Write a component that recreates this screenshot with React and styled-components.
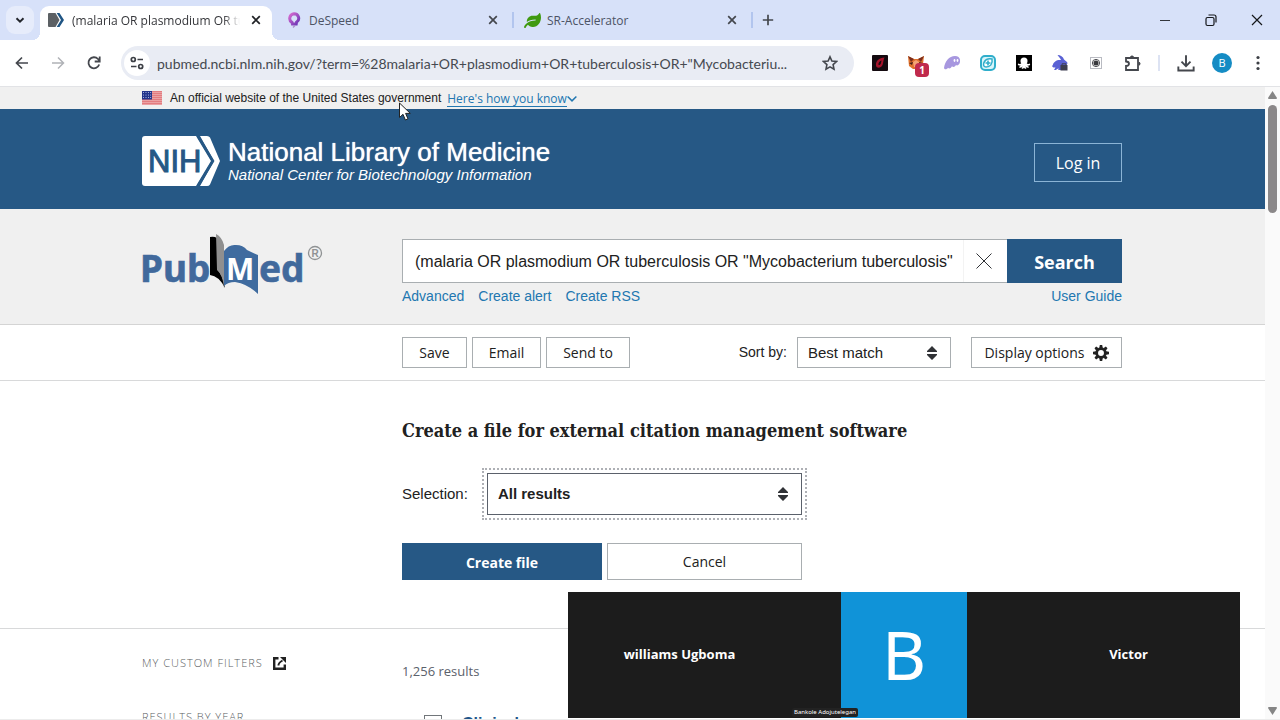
import React from "react";
import styled, { createGlobalStyle } from "styled-components";
import { FaLeaf } from "react-icons/fa";

const ui = `"Open Sans", "Noto Sans", sans-serif`;
const arial = `"Liberation Sans", Arial, sans-serif`;
const blue = "#265885";
const link = "#2277b0";

const Global = createGlobalStyle`
  *, *::before, *::after { box-sizing: border-box; }
  body { margin: 0; background: #fff; color: #212121; font-family: ${arial}; }
  button, select, input { font: inherit; color: inherit; margin: 0; }
  button { cursor: pointer; }
  svg { display: block; flex: none; }
`;

const Screen = styled.div`
  position: relative;
  display: flex;
  flex-direction: column;
  height: 100vh;
  overflow: hidden;
  border-bottom: 1px solid #ececec;
`;

/* ---------- browser frame ---------- */

const TabStrip = styled.div`
  display: flex;
  height: 40px;
  flex: none;
  background: #d7e1f9;
  font-family: ${ui};
`;

const TabSearch = styled.button`
  display: grid;
  place-items: center;
  width: 28px;
  height: 28px;
  margin: 6px 6px 0;
  padding: 0;
  border: 0;
  border-radius: 9px;
  background: #e6ecfb;
`;

const Tab = styled.div`
  position: relative;
  display: flex;
  align-items: center;
  gap: ${(p) => p.$gap || 8}px;
  width: ${(p) => p.$w}px;
  height: 34px;
  margin-top: 6px;
  padding: 0 ${(p) => (p.$active ? 8 : 11)}px 6px ${(p) => p.$pl}px;
  border-radius: 9px 9px 0 0;
  background: ${(p) => (p.$active ? "#fff" : "transparent")};
  color: ${(p) => (p.$active ? "#35363a" : "#4c5365")};
  &::before, &::after {
    content: "";
    display: ${(p) => (p.$active ? "block" : "none")};
    position: absolute;
    bottom: 0;
    width: 8px;
    height: 8px;
  }
  &::before { left: -8px; background: radial-gradient(circle at 0 0, transparent 8px, #fff 8px); }
  &::after { right: -8px; background: radial-gradient(circle at 100% 0, transparent 8px, #fff 8px); }
`;

const TabTitle = styled.span`
  flex: 1;
  min-width: 0;
  overflow: hidden;
  padding-top: 2px;
  white-space: nowrap;
  font-size: 12px;
  line-height: 20px;
  mask-image: ${(p) => (p.$fade ? "linear-gradient(to right, #000 90%, transparent)" : "none")};
`;

const PlainButton = styled.button`
  display: grid;
  place-items: center;
  width: ${(p) => p.$w}px;
  height: ${(p) => p.$h}px;
  flex: none;
  padding: 0;
  border: 0;
  background: none;
`;

const Divider = styled.span`
  width: 2px;
  height: 16px;
  flex: none;
  margin: ${(p) => p.$m};
  background: ${(p) => p.$c};
`;

const WindowControls = styled.div`
  display: flex;
  margin-left: auto;
`;

const Toolbar = styled.div`
  display: flex;
  align-items: center;
  height: 47px;
  flex: none;
  padding: 0 4px;
  border-bottom: 1px solid #e2e3e6;
  font-family: ${ui};
`;

const Omnibox = styled.div`
  display: flex;
  align-items: center;
  flex: 1;
  min-width: 0;
  height: 34px;
  margin: 0 8px 0 9px;
  padding: 0 6px 0 3px;
  border-radius: 17px;
  background: #e9ecf4;
`;

const SiteInfo = styled.button`
  display: grid;
  place-items: center;
  width: 26px;
  height: 26px;
  flex: none;
  padding: 0;
  border: 0;
  border-radius: 50%;
  background: #fff;
`;

const Url = styled.input`
  flex: 1;
  min-width: 0;
  height: 28px;
  margin-left: 7px;
  padding: 0;
  border: 0;
  outline: 0;
  background: none;
  color: #454950;
  font-family: Lato, ${ui};
  font-size: 14px;
  text-overflow: ellipsis;
`;

const Badge = styled.span`
  position: absolute;
  left: 17px;
  top: 18px;
  width: 14px;
  height: 14px;
  border-radius: 4px;
  background: #c02a4c;
  color: #fff;
  font-size: 10px;
  font-weight: 700;
  line-height: 14px;
  text-align: center;
`;

const ExtButton = styled(PlainButton)`
  position: relative;
`;

const Avatar = styled.span`
  width: 20px;
  height: 20px;
  border-radius: 50%;
  background: #158cc4;
  color: #fff;
  font-size: 11px;
  line-height: 20px;
  text-align: center;
`;

/* ---------- page ---------- */

const Viewport = styled.div`
  display: flex;
  flex: 1;
  min-height: 0;
`;

const Page = styled.main`
  flex: 1;
  min-width: 0;
  overflow: hidden;
`;

const ScrollTrack = styled.div`
  display: flex;
  flex-direction: column;
  align-items: center;
  width: 15px;
  padding: 4px 0;
  background: #fafafa;
`;

const ScrollThumb = styled.div`
  width: 9px;
  height: 108px;
  margin: 6px 0 auto;
  border-radius: 5px;
  background: #8b8889;
`;

const Wrap = styled.div`
  display: flex;
  align-items: ${(p) => p.$align || "center"};
  width: 100%;
  max-width: 981px;
  height: 100%;
  margin: 0 auto;
  padding: ${(p) => p.$top || 0}px 1px 0 0;
`;

const Banner = styled.div`
  height: 22px;
  background: #f0f0f0;
  font-size: 12px;
`;

const BannerText = styled.span`
  margin: 0 6px 0 8px;
`;

const KnowLink = styled.a`
  display: flex;
  align-items: center;
  margin-top: 2px;
  color: ${link};
  font-family: ${ui};
  font-size: 12px;
  line-height: 14px;
  text-decoration: none;
  & > span { border-bottom: 1px solid ${link}; }
`;

const NlmHeader = styled.header`
  height: 100px;
  background: ${blue};
  color: #fff;
`;

const NlmNames = styled.div`
  flex: 1;
  margin-left: 8px;
`;

const NlmTitle = styled.div`
  font-size: 26px;
  line-height: 28px;
  text-shadow: 0 0 1px #fff;
`;

const NlmSub = styled.div`
  font-size: 15px;
  font-style: italic;
  line-height: 18px;
`;

const LoginButton = styled.button`
  width: 88px;
  height: 39px;
  margin-top: 3px;
  padding: 1px 0 0;
  border: 1px solid #8bb4d6;
  background: none;
  font-family: ${ui};
  font-size: 16px;
`;

const SearchBand = styled.section`
  height: 116px;
  border-bottom: 1px solid #d4d4d4;
  background: #f0f0f0;
`;

const LogoLink = styled.a`
  width: 264px;
  flex: none;
  margin: 24px 0 0 -4px;
`;

const SearchForm = styled.form`
  flex: 1;
  margin-top: 30px;
`;

const SearchRow = styled.div`
  display: flex;
  height: 44px;
`;

const SearchField = styled.div`
  display: flex;
  flex: 1;
  min-width: 0;
  border: 1px solid #a9aeb1;
  border-right: 0;
  background: #fff;
`;

const SearchInput = styled.input`
  flex: 1;
  min-width: 0;
  padding: 2px 0 0 12px;
  border: 0;
  outline: 0;
  background: none;
  font-size: 16px;
`;

const ClearButton = styled(PlainButton)`
  padding-right: 3px;
  border-left: 1px solid #f3f3f3;
`;

const PrimaryButton = styled.button`
  width: ${(p) => p.$w}px;
  height: ${(p) => p.$h}px;
  flex: none;
  padding: 2px 0 0;
  border: 0;
  background: ${blue};
  color: #fff;
  font-family: ${ui};
  font-size: ${(p) => p.$size}px;
  font-weight: 700;
`;

const LinkRow = styled.div`
  display: flex;
  gap: 14px;
  margin-top: 4px;
  font-size: 14px;
  line-height: 18px;
`;

const TextLink = styled.a`
  margin-left: ${(p) => (p.$end ? "auto" : "0")};
  color: ${link};
  text-decoration: none;
`;

const ActionBar = styled.section`
  height: 56px;
  border-bottom: 1px solid #d8d9da;
`;

const Actions = styled.div`
  display: flex;
  align-items: center;
  flex: 1;
  margin-left: 260px;
`;

const ButtonGroup = styled.div`
  display: flex;
  gap: 5px;
`;

const OutlineButton = styled.button`
  display: flex;
  align-items: center;
  justify-content: center;
  gap: 8px;
  width: ${(p) => p.$w}px;
  height: ${(p) => p.$h || 31}px;
  padding: 0;
  border: 1px solid #a9aeb1;
  background: #fff;
  font-family: ${ui};
  font-size: 14px;
`;

const FieldLabel = styled.label`
  margin-left: ${(p) => (p.$end ? "auto" : "0")};
  padding-bottom: 1px;
  font-size: ${(p) => (p.$end ? 14 : 15)}px;
`;

const SelectBox = styled.div`
  position: relative;
  width: ${(p) => p.$w}px;
  height: ${(p) => p.$h}px;
  margin: ${(p) => p.$m};
  & > svg {
    position: absolute;
    right: 13px;
    top: 50%;
    transform: translateY(-50%);
    pointer-events: none;
  }
`;

const Select = styled.select`
  appearance: none;
  width: 100%;
  height: 100%;
  padding: 0 30px ${(p) => (p.$focus ? 2 : 0)}px 10px;
  border: 1px solid ${(p) => (p.$focus ? "#5b616b" : "#a9aeb1")};
  border-radius: 0;
  outline: ${(p) => (p.$focus ? "2px dotted #aeb0b5" : "none")};
  outline-offset: 3px;
  background: #fff;
  font-size: 15px;
  font-weight: ${(p) => (p.$focus ? 700 : 400)};
`;

const ExportPanel = styled.section`
  height: 248px;
  border-bottom: 1px solid #d8d9da;
`;

const ExportForm = styled.form`
  margin-left: 260px;
`;

const PanelTitle = styled.h3`
  margin: 34px 0 27px;
  font-family: "DejaVu Serif Condensed", "DejaVu Serif", serif;
  font-size: 18px;
  font-weight: 700;
  line-height: 31px;
  white-space: nowrap;
`;

const FormRow = styled.div`
  display: flex;
  align-items: center;
  gap: ${(p) => p.$gap}px;
  margin-bottom: 28px;
`;

const Sidebar = styled.aside`
  width: 260px;
  flex: none;
  padding-top: 22px;
  font-family: ${ui};
`;

const SideHeading = styled.h3`
  display: flex;
  align-items: center;
  gap: 10px;
  margin: 0 0 30px;
  color: #5b5e63;
  font-size: 11px;
  font-weight: 300;
  letter-spacing: 1px;
  line-height: 24px;
  text-transform: uppercase;
`;

const Results = styled.div`
  flex: 1;
  padding-top: 31px;
`;

const Count = styled.div`
  color: #5b616b;
  font-family: ${ui};
  font-size: 13px;
  line-height: 22px;
`;

const ResultRow = styled.div`
  display: flex;
  gap: 20px;
  margin: 33px 0 0 22px;
`;

const Check = styled.input`
  appearance: none;
  width: 18px;
  height: 18px;
  margin: 0;
  border: 1px solid #71767a;
`;

const ResultTitle = styled.label`
  color: #20558a;
  font-size: 16px;
  font-weight: 700;
  line-height: 18px;
`;

/* ---------- meeting overlay ---------- */

const Meeting = styled.section`
  position: absolute;
  right: 40px;
  bottom: 1px;
  display: flex;
  width: 672px;
  height: 126px;
  background: #1c1c1c;
  color: #fff;
  font-family: ${ui};
`;

const Participant = styled.div`
  display: flex;
  align-items: center;
  justify-content: center;
  width: 273px;
  padding: ${(p) => p.$pad};
  font-size: 13px;
  font-weight: 700;
`;

const Letter = styled.div`
  width: 126px;
  background: #1093d8;
  font-family: "Noto Sans", sans-serif;
  font-size: 68px;
  line-height: 124px;
  text-align: center;
`;

const NameTag = styled.span`
  position: absolute;
  left: 224px;
  bottom: 1px;
  padding: 0 2px;
  border-radius: 2px;
  background: #222;
  font-family: "Noto Sans", sans-serif;
  font-size: 6px;
  line-height: 9px;
`;

const Cursor = styled.svg`
  position: absolute;
  left: 398px;
  top: 102px;
`;

/* ---------- icons ---------- */

const Stroke = ({ size = 16, w = 2, color = "#44474d", d, ...rest }) => (
  <svg width={size} height={size} viewBox="0 0 16 16" fill="none" stroke={color} strokeWidth={w} {...rest}>
    <path d={d} />
  </svg>
);

const Close = ({ color }) => <Stroke w={1.700} color={color} d="M4.200 4.200l7.600 7.600M11.800 4.200l-7.600 7.600" />;

const Updown = () => (
  <svg width="12" height="16" viewBox="0 0 12 16" fill="#303236">
    <path d="M6 1l5 5v1H1V6zM6 15l5-5V9H1v1z" />
  </svg>
);

const Gear = () => (
  <svg width="16" height="16" viewBox="-8 -8 16 16">
    <circle r="4.300" fill="none" stroke="#212121" strokeWidth="2.700" />
    {[0, 45, 90, 135, 180, 225, 270, 315].map((a) => (
      <path key={a} d="M-1.700 -5L-1.200 -8H1.200L1.700 -5z" fill="#212121" transform={`rotate(${a})`} />
    ))}
  </svg>
);

const Flag = () => (
  <svg width="20" height="14" viewBox="0 0 20 14">
    <rect width="20" height="14" fill="#fff" />
    {[0, 2, 4, 6, 8, 10, 12].map((y) => (
      <rect key={y} y={y + 0.3} width="20" height="1.200" fill="#d8464a" />
    ))}
    <rect width="10" height="8.500" fill="#23358c" />
    {[1.5, 4, 6.500].map((y) => [1.5, 4, 6.500, 8.700].map((x) => <circle key={x + "-" + y} cx={x} cy={y} r=".5" fill="#d5dcf5" />))}
  </svg>
);

const NihFavicon = () => (
  <svg width="16" height="14" viewBox="0 0 16 14">
    <path d="M1 0H7.500L11.500 7 7.500 14H1Q0 14 0 13V1Q0 0 1 0z" fill="#5c6064" />
    <path d="M8.700 0H11.500L16 7l-4.500 7H8.700L13 7z" fill="#1f5584" />
  </svg>
);

const DeSpeedIcon = () => (
  <svg width="14" height="16" viewBox="0 0 14 16">
    <defs>
      <linearGradient id="ds" x1="0" y1="0" x2="1" y2="1">
        <stop offset="0" stopColor="#d66bd0" />
        <stop offset="1" stopColor="#6a35b5" />
      </linearGradient>
    </defs>
    <path d="M7 1.700a4.600 4.600 0 0 1 2.500 8.500L9.200 12H5.400L5 10.400A4.700 4.700 0 0 1 7 1.700z" fill="none" stroke="url(#ds)" strokeWidth="3" />
    <path d="M6 15.500l2-2" stroke="#a98cc9" strokeWidth="1.200" />
  </svg>
);

const NihLogo = () => (
  <svg width="78" height="50" viewBox="0 0 78 50" role="img" aria-label="NIH">
    <path d="M3 0H54L69 25 54 50H3Q0 50 0 47V3Q0 0 3 0z" fill="#fff" />
    <path d="M58 0h7q2 0 3 1.500L78 25 68 48.500Q67 50 65 50h-7L72 25z" fill="#fff" />
    <path d="M56 0L71 25 56 50" fill="none" stroke={blue} strokeWidth="2.500" />
    <text x="6" y="36" fontFamily="Liberation Sans, sans-serif" fontSize="31" fill={blue} stroke={blue} strokeWidth="1">NIH</text>
  </svg>
);

const PubMedLogo = () => (
  <svg width="186" height="64" viewBox="-4 0 186 64" role="img" aria-label="PubMed">
    <g fontFamily="Noto Sans, sans-serif" fontWeight="700" fill="#41699c" stroke="#41699c" strokeWidth=".6">
      <text x="-2" y="49" fontSize="37">Pub</text>
      <text x="117" y="49" fontSize="37">ed</text>
    </g>
    <path d="M68 4Q72 3 75 5V36Q81 42 83 55 77 43 68 42z" fill="#000" />
    <path d="M74 1Q80 4 82 12V55Q81 42 75 37z" fill="#8f8f8f" />
    <path d="M82 18Q87 11 94 12 101 12 105 17 111 20 116 22V61Q106 51 93 49 86 49 82 53z" fill="#3f6b9f" />
    <text x="84" y="47" fontFamily="Noto Sans, sans-serif" fontWeight="700" fontSize="30" fill="#fff">M</text>
    <circle cx="173" cy="20" r="6.500" fill="none" stroke="#8f9294" strokeWidth="1.300" />
    <text x="169.500" y="24" fontFamily="Liberation Sans, sans-serif" fontWeight="700" fontSize="10" fill="#8f9294">R</text>
  </svg>
);

const extensions = [
  ["Red extension", (
    <svg width="16" height="16" viewBox="0 0 16 16"><rect width="16" height="16" rx="1" fill="#140a0f" /><path d="M12.500 2.500C7 3 3.500 6 4 10.500c.3 3 5 3 6.500-.5 1-2.500.5-4 2-7.500zM6.500 10C6 7.500 8 6 9.500 5.500 9 8 9 10 6.500 10z" fill="#a5122a" /></svg>
  )],
  ["Wallet", (
    <svg width="16" height="16" viewBox="0 0 16 16"><path d="M0 1l6 3h4l6-3-1 8-4 5H5l-4-3z" fill="#e0712c" /><path d="M0 1l6 3-3 3zM16 1l-6 3 3 3z" fill="#7a2d1d" /><path d="M5 7l3-2 3 2-1 5H6z" fill="#f3a476" /><path d="M1 8l4-1-1 3zM15 8l-4-1 1 3z" fill="#44201b" /></svg>
  ), "1"],
  ["Ghost wallet", (
    <svg width="16" height="14" viewBox="0 0 16 14"><path d="M0 12C1 5 5 0 11 0c4 0 5.500 3 5 6-.5 3-3 4-4 3-1 2-3 2.500-4 1.300-1.500 2.500-3 2.700-4 1.500C3 13.500.5 14 0 12z" fill="#a797df" /><ellipse cx="10.500" cy="4.500" rx=".9" ry="1.400" fill="#fff" /><ellipse cx="13.500" cy="4.500" rx=".9" ry="1.400" fill="#fff" /></svg>
  )],
  ["Teal extension", (
    <svg width="16" height="16" viewBox="0 0 16 16" fill="none" stroke="#30aecb"><rect x="1" y="1" width="14" height="14" rx="4" strokeWidth="2" fill="#d9f5fa" /><path d="M12 4c1 5-2 8-6 8-3 0-3-3-1.500-5.500S9 3.500 12 4z" strokeWidth="1.500" fill="#fff" /><path d="M8 5.500v5M5.500 8h5" strokeWidth="1.600" /></svg>
  )],
  ["Octopus", (
    <svg width="16" height="16" viewBox="0 0 16 16"><rect width="16" height="16" fill="#000" /><ellipse cx="8" cy="6" rx="3.500" ry="3.600" fill="#fff" /><path d="M7 8Q5 10.500 2.700 9.500M7 8.500Q6 12 4 12M7.500 8.500Q8 12.500 6.500 13M9 8Q11 10.500 13.300 9.500M9 8.500Q10 12 12 12M8.500 8.500Q8 12.500 9.500 13" fill="none" stroke="#fff" strokeWidth="1.700" strokeLinecap="round" /></svg>
  )],
  ["Rabbit", (
    <svg width="16" height="16" viewBox="0 0 16 16"><path d="M5.500 0c3 0 5.500 1.500 6.500 4.500l3 2.500c1 1.500 0 3-1.500 3H12l-1 5H6l1-1.500-2 .5-1 1H2l1.500-2.500C0 13-.5 10.500.8 10.200 1.500 6.500 5 4.500 9 5 8.500 3 6.500 2 5.500 0z" fill="#5961d4" /><rect x="8.500" y="10" width="7" height="5.500" fill="#3c3d50" /><path d="M10 10V8.800h4V10" fill="none" stroke="#3c3d50" /></svg>
  )],
  ["Recorder", (
    <svg width="12" height="12" viewBox="0 0 12 12"><rect x=".5" y=".5" width="11" height="11" fill="#fff" stroke="#b9bbc2" /><circle cx="6" cy="6" r="3.600" fill="none" stroke="#4a4b50" /><circle cx="6" cy="6" r="2.500" fill="#37383c" /></svg>
  )],
  ["Extensions", (
    <svg width="18" height="18" viewBox="0 0 18 18"><path d="M3 4h12v12H3v-4q3 0 3-2.200T3 7.500z" fill="none" stroke="#44474d" strokeWidth="1.800" /><path d="M7.500 3a1.600 1.600 0 0 1 3 0zM16 8.200a1.600 1.600 0 0 1 0 3z" fill="#44474d" stroke="#44474d" /></svg>
  )],
];

export default function App() {
  return (
    <>
      <Global />
      <Screen>
        <TabStrip>
          <TabSearch aria-label="Search tabs"><Stroke size={14} color="#22252b" w={2.200} d="M4 6l4 4 4-4" /></TabSearch>
          <Tab $active $w={232} $pl={8}>
            <NihFavicon />
            <TabTitle $fade>(malaria OR plasmodium OR tu</TabTitle>
            <PlainButton $w={16} $h={16} aria-label="Close tab"><Close color="#202226" /></PlainButton>
          </Tab>
          <Tab $w={240} $pl={15}>
            <DeSpeedIcon />
            <TabTitle>DeSpeed</TabTitle>
            <PlainButton $w={16} $h={16} aria-label="Close tab"><Close /></PlainButton>
          </Tab>
          <Divider $m="12px 0 0" $c="#b2c5ee" />
          <Tab $w={237} $pl={10} $gap={6}>
            <FaLeaf size={17} color="#3f9a10" />
            <TabTitle>SR-Accelerator</TabTitle>
            <PlainButton $w={16} $h={16} aria-label="Close tab"><Close /></PlainButton>
          </Tab>
          <Divider $m="12px 0 0" $c="#b2c5ee" />
          <PlainButton $w={30} $h={40} aria-label="New tab"><Stroke w={1.700} d="M8 2.800v10.400M2.800 8h10.400" /></PlainButton>
          <WindowControls>
            <PlainButton $w={46} $h={40} aria-label="Minimize"><Stroke w={1} color="#33363c" d="M3 8.500h10" /></PlainButton>
            <PlainButton $w={46} $h={40} aria-label="Restore"><Stroke w={1.200} color="#15171b" d="M4.500 5.500h5q1.500 0 1.500 1.500v5q0 1.500-1.500 1.500h-5Q3 13.500 3 12V7q0-1.500 1.500-1.500zM5.500 3h5.500q2 0 2 2v5.500" /></PlainButton>
            <PlainButton $w={46} $h={40} aria-label="Close window"><Stroke w={1.200} color="#15171b" d="M3 3l10 10M13 3L3 13" /></PlainButton>
          </WindowControls>
        </TabStrip>

        <Toolbar>
          <PlainButton $w={36} $h={36} aria-label="Back"><Stroke w={1.700} d="M14 8H3M8 2.500L2.500 8 8 13.500" /></PlainButton>
          <PlainButton $w={36} $h={36} aria-label="Forward"><Stroke w={1.500} color="#b0b2b7" d="M2 8h11M8 2.500L13.500 8 8 13.500" /></PlainButton>
          <PlainButton $w={36} $h={36} aria-label="Reload"><Stroke w={1.800} d="M13.200 9.500A5.500 5.500 0 1 1 12 4l1.500 1.700M13.700 1.500v5h-5" /></PlainButton>
          <Omnibox>
            <SiteInfo aria-label="Site information">
              <svg width="14" height="14" viewBox="0 0 14 14" fill="none" stroke="#3c3f45" strokeWidth="1.700"><circle cx="3.300" cy="3.500" r="2" /><circle cx="10.700" cy="10.500" r="2" /><path d="M7.500 3.500H13M1 10.500h5.500" /></svg>
            </SiteInfo>
            <Url aria-label="Address" readOnly value={'pubmed.ncbi.nlm.nih.gov/?term=%28malaria+OR+plasmodium+OR+tuberculosis+OR+"Mycobacteriu...'} />
            <PlainButton $w={36} $h={34} aria-label="Bookmark"><Stroke w={1.600} d="M8 1.800l1.900 4.200 4.600.5-3.400 3.100.9 4.600L8 11.900l-4 2.300.9-4.600L1.500 6.500 6.100 6z" /></PlainButton>
          </Omnibox>
          {extensions.map(([name, icon, badge]) => (
            <ExtButton key={name} $w={36} $h={36} aria-label={name}>{icon}{badge && <Badge>{badge}</Badge>}</ExtButton>
          ))}
          <Divider $m="0 8px" $c="#dde3f3" />
          <PlainButton $w={36} $h={36} aria-label="Downloads"><Stroke size={18} w={1.700} d="M8 1v9.500M4 6.800l4 4 4-4M1.200 11v3.600h13.600V11" /></PlainButton>
          <PlainButton $w={36} $h={36} aria-label="Profile"><Avatar>B</Avatar></PlainButton>
          <PlainButton $w={36} $h={36} aria-label="Menu">
            <svg width="4" height="16" viewBox="0 0 4 16" fill="#3c3f45"><circle cx="2" cy="2.500" r="1.600" /><circle cx="2" cy="8" r="1.600" /><circle cx="2" cy="13.500" r="1.600" /></svg>
          </PlainButton>
        </Toolbar>

        <Viewport>
          <Page>
            <Banner>
              <Wrap>
                <Flag />
                <BannerText>An official website of the United States government</BannerText>
                <KnowLink href="#know"><span>Here's how you know</span><Stroke size={10} w={2.400} color={link} d="M1 4l7 7 7-7" /></KnowLink>
              </Wrap>
            </Banner>

            <NlmHeader>
              <Wrap $top={4}>
                <NihLogo />
                <NlmNames>
                  <NlmTitle>National Library of Medicine</NlmTitle>
                  <NlmSub>National Center for Biotechnology Information</NlmSub>
                </NlmNames>
                <LoginButton>Log in</LoginButton>
              </Wrap>
            </NlmHeader>

            <SearchBand>
              <Wrap $align="flex-start">
                <LogoLink href="#home"><PubMedLogo /></LogoLink>
                <SearchForm>
                  <SearchRow>
                    <SearchField>
                      <SearchInput aria-label="Search term" defaultValue={'(malaria OR plasmodium OR tuberculosis OR "Mycobacterium tuberculosis"'} />
                      <ClearButton type="button" $w={44} $h={42} aria-label="Clear search"><Stroke w={1} color="#303236" d="M.5 .5l15 15M15.500.5l-15 15" /></ClearButton>
                    </SearchField>
                    <PrimaryButton type="button" $w={115} $h={44} $size={18}>Search</PrimaryButton>
                  </SearchRow>
                  <LinkRow>
                    <TextLink href="#advanced">Advanced</TextLink>
                    <TextLink href="#alert">Create alert</TextLink>
                    <TextLink href="#rss">Create RSS</TextLink>
                    <TextLink href="#guide" $end>User Guide</TextLink>
                  </LinkRow>
                </SearchForm>
              </Wrap>
            </SearchBand>

            <ActionBar>
              <Wrap>
                <Actions>
                  <ButtonGroup>
                    <OutlineButton $w={65}>Save</OutlineButton>
                    <OutlineButton $w={69}>Email</OutlineButton>
                    <OutlineButton $w={84}>Send to</OutlineButton>
                  </ButtonGroup>
                  <FieldLabel htmlFor="sort" $end>Sort by:</FieldLabel>
                  <SelectBox $w={154} $h={31} $m="0 20px 0 10px">
                    <Select id="sort"><option>Best match</option></Select>
                    <Updown />
                  </SelectBox>
                  <OutlineButton $w={151}>Display options <Gear /></OutlineButton>
                </Actions>
              </Wrap>
            </ActionBar>

            <ExportPanel>
              <Wrap $align="flex-start">
                <ExportForm>
                  <PanelTitle>Create a file for external citation management software</PanelTitle>
                  <FormRow $gap={19}>
                    <FieldLabel htmlFor="selection">Selection:</FieldLabel>
                    <SelectBox $w={315} $h={42} $m="0">
                      <Select id="selection" $focus><option>All results</option></Select>
                      <Updown />
                    </SelectBox>
                  </FormRow>
                  <FormRow $gap={5}>
                    <PrimaryButton type="button" $w={200} $h={37} $size={14}>Create file</PrimaryButton>
                    <OutlineButton type="button" $w={195} $h={37}>Cancel</OutlineButton>
                  </FormRow>
                </ExportForm>
              </Wrap>
            </ExportPanel>

            <Wrap $align="flex-start">
              <Sidebar>
                <SideHeading>
                  My custom filters
                  <svg width="13" height="13" viewBox="0 0 13 13" fill="none" stroke="#212121"><path d="M5.500 1.200H1.200v10.600h10.600V7.500" strokeWidth="2.400" /><path d="M5.500 8.500Q5.200 6 9.500 3.500" strokeWidth="2" /><path d="M7 0H13V6z" fill="#212121" stroke="none" /></svg>
                </SideHeading>
                <SideHeading>Results by year</SideHeading>
              </Sidebar>
              <Results>
                <Count>1,256 results</Count>
                <ResultRow>
                  <Check type="checkbox" id="r1" />
                  <ResultTitle htmlFor="r1">Clinical</ResultTitle>
                </ResultRow>
              </Results>
            </Wrap>
          </Page>

          <ScrollTrack aria-hidden="true">
            <svg width="9" height="8" viewBox="0 0 9 8"><path d="M4.500 0L9 7q0 1-1 1H1Q0 8 0 7z" fill="#858585" /></svg>
            <ScrollThumb />
            <svg width="9" height="8" viewBox="0 0 9 8"><path d="M4.500 8L9 1q0-1-1-1H1Q0 0 0 1z" fill="#858585" /></svg>
          </ScrollTrack>
        </Viewport>

        <Meeting>
          <Participant $pad="0 50px 2px 0">williams Ugboma</Participant>
          <Letter>B</Letter>
          <Participant $pad="0 0 2px 50px">Victor</Participant>
          <NameTag>Bankole Adojutelegan</NameTag>
        </Meeting>

        <Cursor width="14" height="20" viewBox="0 0 14 20">
          <path d="M1.500 1v14.500l3.500-3.200 2.400 5.700 2.600-1.100-2.400-5.500h4.700z" fill="#fff" stroke="#222" />
        </Cursor>
      </Screen>
    </>
  );
}
